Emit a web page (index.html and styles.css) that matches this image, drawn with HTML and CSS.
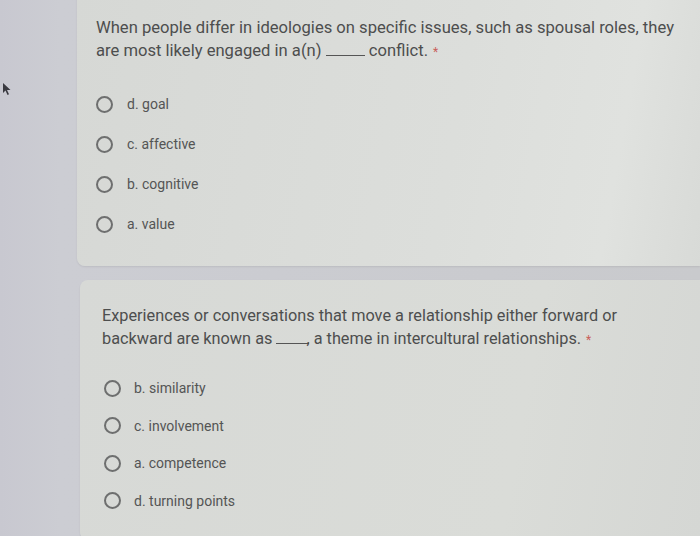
FILE: index.html
```html
<!DOCTYPE html>
<html>
<head>
<meta charset="utf-8">
<link rel="stylesheet" href="styles.css">
</head>
<body>
<div class="page">
  <svg class="cursor" width="10" height="14" viewBox="0 0 10 14"><path d="M1 1 L1 11 L3.5 8.5 L5.5 13 L7 12.3 L5 8 L8.5 8 Z" fill="#3a3a40"/></svg>
  <section class="card card-one">
    <p class="question">When people differ in ideologies on specific issues, such as spousal roles, they are most likely engaged in a(n) <span class="blank blank-one"></span> conflict.<span class="req">*</span></p>
    <ul class="options">
      <li class="option"><span class="radio"></span><span class="label">d. goal</span></li>
      <li class="option"><span class="radio"></span><span class="label">c. affective</span></li>
      <li class="option"><span class="radio"></span><span class="label">b. cognitive</span></li>
      <li class="option"><span class="radio"></span><span class="label">a. value</span></li>
    </ul>
  </section>
  <section class="card card-two">
    <p class="question">Experiences or conversations that move a relationship either forward or backward are known as <span class="blank blank-two"></span>, a theme in intercultural relationships.<span class="req">*</span></p>
    <ul class="options">
      <li class="option"><span class="radio"></span><span class="label">b. similarity</span></li>
      <li class="option"><span class="radio"></span><span class="label">c. involvement</span></li>
      <li class="option"><span class="radio"></span><span class="label">a. competence</span></li>
      <li class="option"><span class="radio"></span><span class="label">d. turning points</span></li>
    </ul>
  </section>
</div>
</body>
</html>
```
FILE: styles.css
```css
html, body {
  margin: 0;
  padding: 0;
}
body {
  width: 700px;
  height: 536px;
  overflow: hidden;
  background: linear-gradient(90deg, #c8c8d0 0%, #cccdd3 60px, #c9cacd 100%);
  font-family: Roboto, "Liberation Sans", sans-serif;
}
.page {
  position: relative;
  display: flex;
  flex-direction: column;
  gap: 14px;
}
.cursor {
  position: absolute;
  left: 2px;
  top: 82px;
}
.card {
  border-radius: 8px 0 0 8px;
  box-shadow: 0 1px 2px rgba(0,0,0,0.08);
  box-sizing: border-box;
}
.card-one {
  margin-left: 77px;
  margin-top: -20px;
  height: 286px;
  padding: 36px 0 0 19px;
  background: linear-gradient(100deg, #d6d8d5 0%, #dcdedb 60%, #e0e2df 85%, #d8dad7 100%);
}
.card-two {
  margin-left: 80px;
  height: 260px;
  padding: 24px 0 0 22px;
  background: linear-gradient(100deg, #d7d9d6 0%, #dadcd8 70%, #d5d7d4 100%);
}
.question {
  margin: 0;
  width: 604px;
  font-size: 16.6px;
  line-height: 23px;
  color: #4d4e4e;
}
.card-two .question {
  width: 545px;
  font-size: 16.3px;
}
.blank {
  display: inline-block;
  vertical-align: baseline;
  height: 1px;
  border-bottom: 1.5px solid #555;
}
.blank-one {
  width: 39px;
}
.blank-two {
  width: 33px;
  margin-right: -3px;
}
.req {
  color: #c9605a;
  font-size: 12px;
  margin-left: 5px;
}
.options {
  list-style: none;
  margin: 30px 0 0 0;
  padding: 0;
  display: flex;
  flex-direction: column;
  gap: 20px;
}
.card-two .options {
  margin-top: 26px;
  gap: 17.5px;
  padding-left: 2px;
}
.option {
  display: flex;
  align-items: center;
  gap: 14px;
  height: 20px;
}
.card-two .option {
  gap: 13px;
}
.radio {
  width: 13px;
  height: 13px;
  border: 2px solid #6e6f6f;
  border-radius: 50%;
  flex: none;
}
.label {
  font-size: 14px;
  color: #545555;
}
```
